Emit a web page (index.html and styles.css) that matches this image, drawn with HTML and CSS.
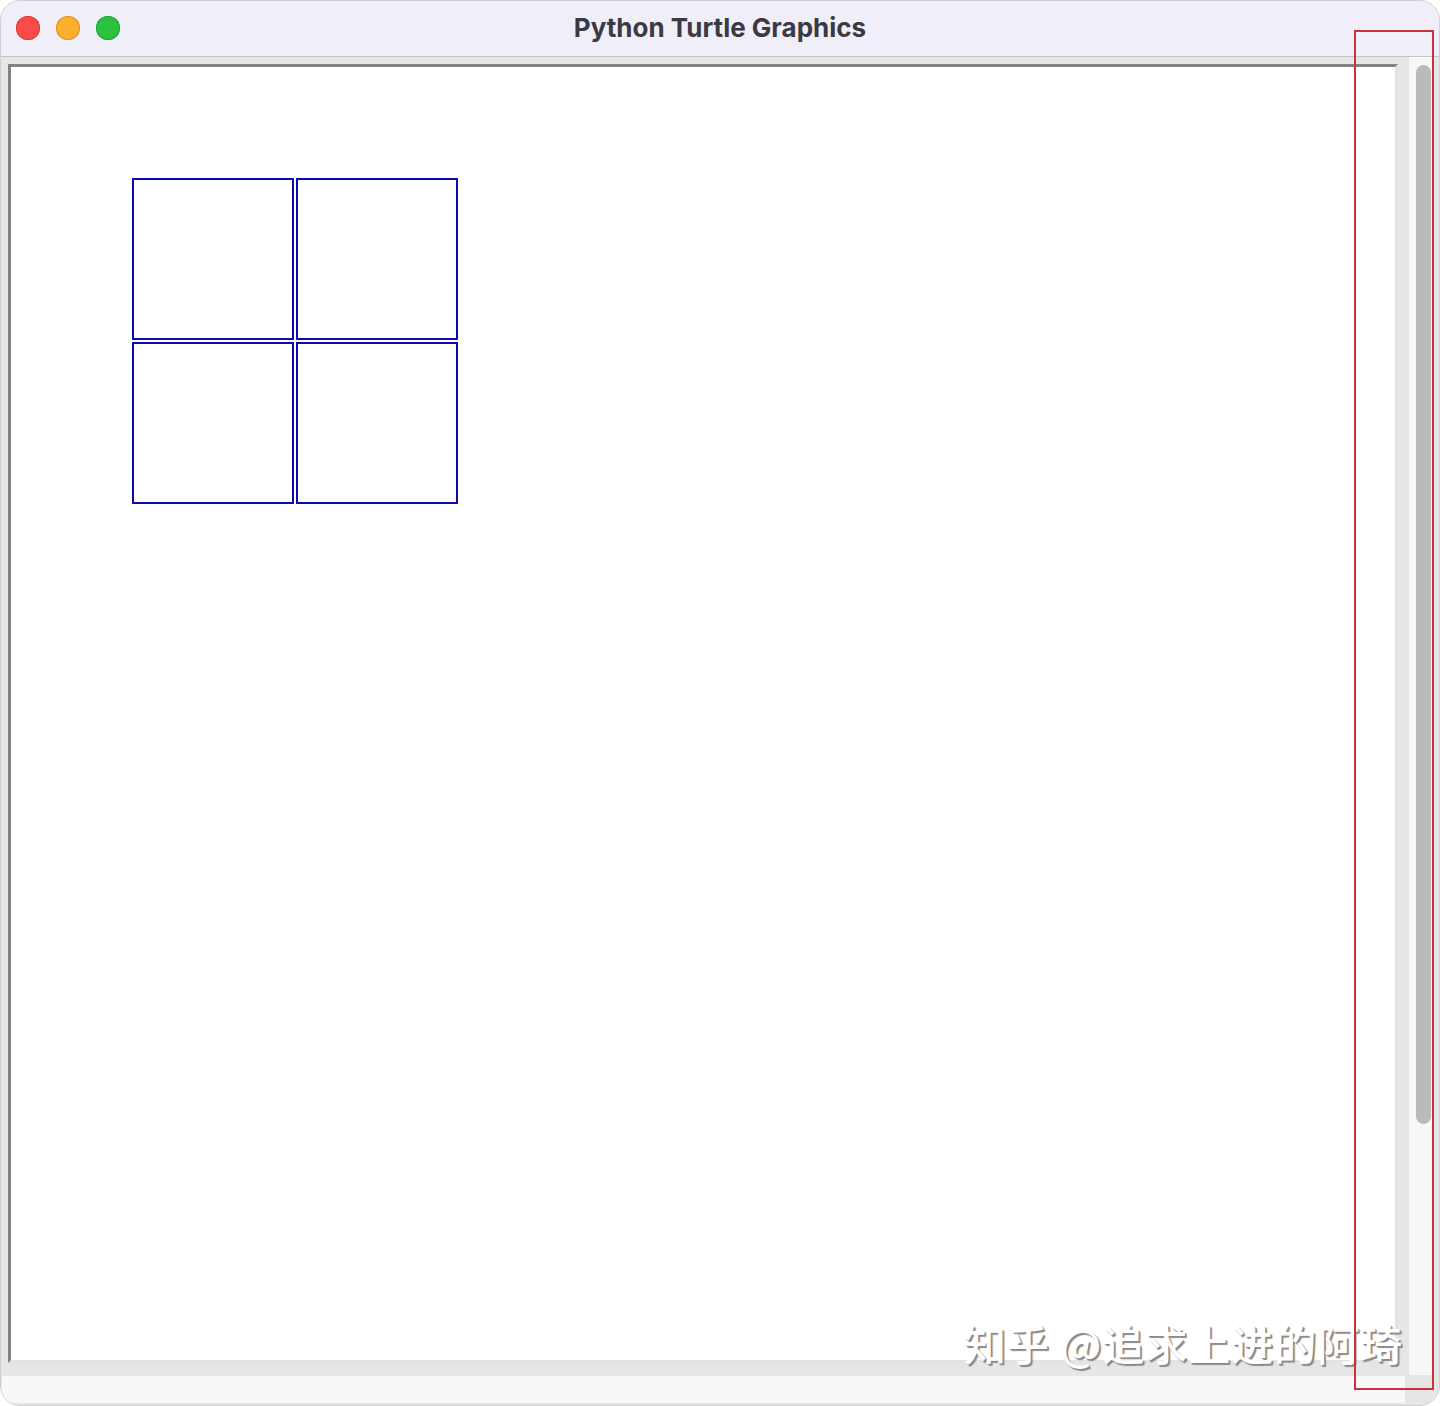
FILE: index.html
```html
<!DOCTYPE html>
<html lang="zh-CN">
<head>
<meta charset="utf-8">
<title>Python Turtle Graphics</title>
<link rel="stylesheet" href="styles.css">
</head>
<body>
<div class="window">
  <header class="titlebar">
    <div class="lights">
      <span class="light red"></span>
      <span class="light yellow"></span>
      <span class="light green"></span>
    </div>
    <div class="title">Python Turtle Graphics</div>
  </header>
  <main class="body">
    <section class="canvas-cell">
      <div class="canvas">
        <div class="squares">
          <div class="sq"></div>
          <div class="sq"></div>
          <div class="sq"></div>
          <div class="sq"></div>
        </div>
      </div>
    </section>
    <aside class="vscroll">
      <div class="vtrack"><div class="vthumb"></div></div>
    </aside>
    <div class="hscroll"><div class="htrack"></div></div>
    <div class="corner"></div>
  </main>
  <div class="watermark">知乎 @追求上进的阿琦</div>
  <div class="annot"></div>
</div>
</body>
</html>
```
FILE: styles.css
```css
* { box-sizing: border-box; }
html, body { margin: 0; padding: 0; background: #ffffff; }
body { width: 1440px; height: 1406px; overflow: hidden; font-family: "Inter", "Noto Sans", sans-serif; }

.window {
  position: relative;
  width: 1440px;
  height: 1406px;
  border: 1px solid #cfcfd2;
  border-radius: 20px;
  overflow: hidden;
  display: flex;
  flex-direction: column;
  background: #e6e6e6;
}

.titlebar {
  height: 56px;
  flex: 0 0 56px;
  background: #efeef9;
  border-bottom: 1px solid #c5c5c9;
  display: flex;
  align-items: center;
  position: relative;
  padding-bottom: 1px;
}
.lights { display: flex; gap: 16px; padding-left: 15px; }
.light { width: 24px; height: 24px; border-radius: 50%; display: block; }
.red { background: #fb4a47; box-shadow: inset 0 0 0 1px #dd3b3a; }
.yellow { background: #fdaf2b; box-shadow: inset 0 0 0 1px #de9520; }
.green { background: #2ac23e; box-shadow: inset 0 0 0 1px #1fa532; }
.title {
  position: absolute;
  left: 0; right: 0; top: 0; bottom: 3px;
  display: flex; align-items: center; justify-content: center;
  font-size: 26px; font-weight: 700; color: #3b3a43;
  pointer-events: none;
}

.body {
  flex: 1;
  display: grid;
  grid-template-columns: 1408px 1fr;
  grid-template-rows: 1318px 1fr;
  background: #e6e6e6;
}
.canvas-cell { padding: 7px 11px 12px 7px; }
.canvas {
  height: 100%;
  background: #ffffff;
  border-style: solid;
  border-width: 3px;
  border-color: #828282 #e3e3e3 #e3e3e3 #828282;
  padding: 111px 0 0 121px;
}
.squares {
  display: grid;
  grid-template-columns: 162px 162px;
  grid-template-rows: 162px 162px;
  gap: 2px;
}
.sq { border: 2px solid #0c0cae; }

.vscroll { padding: 0 6px 0 0; }
.vtrack { height: 100%; background: #f7f7f7; padding: 8px 0 0 7px; }
.vthumb { width: 15px; height: 1059px; border-radius: 8px; background: #bababa; }

.hscroll { padding: 1px 4px 2px 1px; }
.htrack { height: 100%; background: #f8f8f8; }
.corner { background: #e6e6e6; }

.watermark {
  position: absolute;
  left: 963px;
  top: 1311px;
  font-family: "Noto Sans CJK SC", "Noto Sans", sans-serif;
  font-size: 42px;
  font-weight: 500;
  color: #ffffff;
  text-shadow: 2px 2px 1px #8a8a8a, 1px 1px 0 #a0a0a0;
  white-space: nowrap;
  letter-spacing: 1px;
}
.annot {
  position: absolute;
  left: 1353px;
  top: 29px;
  width: 80px;
  height: 1360px;
  border: 2px solid #c8323c;
}
```
